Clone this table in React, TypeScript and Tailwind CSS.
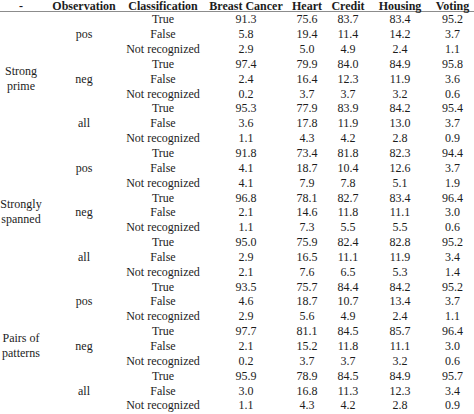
import React from 'react';

type Group = {
  label: string[];
  obs: { name: string; rows: string[][] }[];
};

const classes = ['True', 'False', 'Not recognized'];

const groups: Group[] = [
  {
    label: ['Strong', 'prime'],
    obs: [
      { name: 'pos', rows: [['91.3', '75.6', '83.7', '83.4', '95.2'], ['5.8', '19.4', '11.4', '14.2', '3.7'], ['2.9', '5.0', '4.9', '2.4', '1.1']] },
      { name: 'neg', rows: [['97.4', '79.9', '84.0', '84.9', '95.8'], ['2.4', '16.4', '12.3', '11.9', '3.6'], ['0.2', '3.7', '3.7', '3.2', '0.6']] },
      { name: 'all', rows: [['95.3', '77.9', '83.9', '84.2', '95.4'], ['3.6', '17.8', '11.9', '13.0', '3.7'], ['1.1', '4.3', '4.2', '2.8', '0.9']] },
    ],
  },
  {
    label: ['Strongly', 'spanned'],
    obs: [
      { name: 'pos', rows: [['91.8', '73.4', '81.8', '82.3', '94.4'], ['4.1', '18.7', '10.4', '12.6', '3.7'], ['4.1', '7.9', '7.8', '5.1', '1.9']] },
      { name: 'neg', rows: [['96.8', '78.1', '82.7', '83.4', '96.4'], ['2.1', '14.6', '11.8', '11.1', '3.0'], ['1.1', '7.3', '5.5', '5.5', '0.6']] },
      { name: 'all', rows: [['95.0', '75.9', '82.4', '82.8', '95.2'], ['2.9', '16.5', '11.1', '11.9', '3.4'], ['2.1', '7.6', '6.5', '5.3', '1.4']] },
    ],
  },
  {
    label: ['Pairs of', 'patterns'],
    obs: [
      { name: 'pos', rows: [['93.5', '75.7', '84.4', '84.2', '95.2'], ['4.6', '18.7', '10.7', '13.4', '3.7'], ['2.9', '5.6', '4.9', '2.4', '1.1']] },
      { name: 'neg', rows: [['97.7', '81.1', '84.5', '85.7', '96.4'], ['2.1', '15.2', '11.8', '11.1', '3.0'], ['0.2', '3.7', '3.7', '3.2', '0.6']] },
      { name: 'all', rows: [['95.9', '78.9', '84.5', '84.9', '95.7'], ['3.0', '16.8', '11.3', '12.3', '3.4'], ['1.1', '4.3', '4.2', '2.8', '0.9']] },
    ],
  },
];

const headers = ['-', 'Observation', 'Classification', 'Breast Cancer', 'Heart', 'Credit', 'Housing', 'Voting'];

const cols = 'grid grid-cols-[42px_84px_74px_92px_30px_52px_52px_48px]';

function Cell({ children, last }: { children: React.ReactNode; last?: boolean }) {
  return (
    <div className={`flex items-center justify-center whitespace-nowrap ${last ? 'pl-[5px]' : ''}`}>
      {children}
    </div>
  );
}

export default function App() {
  return (
    <div
      className="w-[474px] h-[414px] overflow-hidden bg-white text-[12px] text-[#1c1c1c]"
      style={{ fontFamily: '"Liberation Serif", "Times New Roman", serif' }}
    >
      {/* header row, top is cropped in the source */}
      <div className={`${cols} h-[15px] -mt-[3px] border-b border-[#8c8c8c] font-bold`}>
        {headers.map((h, i) => (
          <Cell key={h} last={i === headers.length - 1}>{h}</Cell>
        ))}
      </div>

      <div className={`${cols} auto-rows-[14.85px]`}>
        {groups.map((g) =>
          g.obs.map((o, oi) =>
            o.rows.map((vals, ri) => (
              <React.Fragment key={g.label.join() + o.name + ri}>
                {oi === 0 && ri === 0 && (
                  <div className="row-span-9 flex flex-col items-center justify-center leading-[15px] whitespace-nowrap">
                    <span>{g.label[0]}</span>
                    <span>{g.label[1]}</span>
                  </div>
                )}
                {ri === 0 && (
                  <div className="row-span-3 flex items-center justify-center">{o.name}</div>
                )}
                <Cell>{classes[ri]}</Cell>
                {vals.map((v, vi) => (
                  <Cell key={vi} last={vi === 4}>{v}</Cell>
                ))}
              </React.Fragment>
            ))
          )
        )}
      </div>
    </div>
  );
}
